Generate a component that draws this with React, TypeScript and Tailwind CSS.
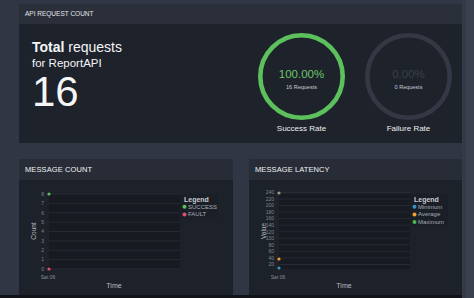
const font = { fontFamily: '"Liberation Sans", Arial, sans-serif' };
const ff = '"Liberation Sans", Arial, sans-serif';

function Gauge({ pct, sub, label, color, textColor }: { pct: string; sub: string; label: string; color: string; textColor: string }) {
  return (
    <div className="flex flex-col items-center w-[87px]">
      <div className="relative w-[87px] h-[87px]">
        <svg width="87" height="87" viewBox="0 0 87 87">
          <circle cx="43.5" cy="43.5" r="41.2" fill="none" stroke={color} strokeWidth="4.6" />
        </svg>
        <div className="absolute inset-0 flex flex-col items-center justify-center pt-[6px]">
          <span className="text-[11.5px] leading-none" style={{ color: textColor }}>{pct}</span>
          <span className="text-[5.5px] leading-none text-[#c8ccd2] mt-[4px]">{sub}</span>
        </div>
      </div>
      <span className="mt-[5px] text-[8px] leading-none text-[#eceef1]">{label}</span>
    </div>
  );
}

type Item = { name: string; color: string };

function Chart({ yTicks, yPos, axis, legend, points, legendH }: {
  yTicks: number[];
  yPos: (v: number) => number;
  axis: string;
  legend: Item[];
  points: { x: number; y: number; c: string }[];
  legendH: number;
}) {
  return (
    <svg width="214" height="115" viewBox="0 0 214 115" fontFamily={ff}>
      <rect x="30" y="14" width="131" height="75" fill="#171a21" />
      {yTicks.map((v) => (
        <g key={v}>
          <line x1="30" x2="161" y1={yPos(v)} y2={yPos(v)} stroke="#2a2f3a" strokeWidth="0.8" />
          <text x="25" y={yPos(v) + 1.8} fontSize="5" fill="#7f8590" textAnchor="end" fontFamily={ff}>{v}</text>
        </g>
      ))}
      <text x="0" y="0" fontSize="6.5" fill="#b4b8bf" textAnchor="middle" fontFamily={ff} transform="translate(17 51) rotate(-90)">{axis}</text>
      <text x="29" y="99" fontSize="5" fill="#8a909a" textAnchor="middle" fontFamily={ff}>Sat 06</text>
      <text x="95" y="107.5" fontSize="7" fill="#b8bcc3" textAnchor="middle" fontFamily={ff}>Time</text>
      <rect x="161" y="14" width="38" height={legendH} fill="#1a1e26" />
      <text x="165" y="21.5" fontSize="7" fontWeight="bold" fill="#c9ccd2" fontFamily={ff}>Legend</text>
      {legend.map((l, i) => (
        <g key={l.name}>
          <circle cx="165.5" cy={26.8 + i * 7.6} r="2" fill={l.color} />
          <text x="169" y={28.8 + i * 7.6} fontSize="6" fill="#a8adb5" fontFamily={ff}>{l.name}</text>
        </g>
      ))}
      {points.map((p, i) => (
        <circle key={i} cx={p.x} cy={p.y} r="1.6" fill={p.c} />
      ))}
    </svg>
  );
}

function Panel({ title, children, className }: { title: string; children: React.ReactNode; className: string }) {
  return (
    <div className={`flex flex-col ${className}`}>
      <div className="h-[21px] flex items-center pl-[6px] bg-[#272c36] text-[7.5px] text-[#f2f3f5] tracking-[0.1px]">{title}</div>
      <div className="flex-1 bg-[#1d2129]">{children}</div>
    </div>
  );
}

export default function App() {
  const countY = (v: number) => 89 - v * 9.375;
  const latY = (v: number) => 91 - v * 0.327;
  return (
    <div className="w-[474px] h-[298px] flex bg-[#303643] overflow-hidden" style={font}>
      <div className="flex-1 flex flex-col pl-[19px] pt-[4px]">
        <div className="w-[443px] h-[139px] flex flex-col">
          <div className="h-[20px] flex items-center pl-[6px] bg-[#2a2f3a] text-[6.5px] text-[#e4e6ea]">API REQUEST COUNT</div>
          <div className="flex-1 bg-[#1e222b] flex justify-between">
            <div className="pl-[13px] pt-[16px] text-[#f4f5f7]">
              <div className="text-[14px] leading-none"><span className="font-bold">Total</span> requests</div>
              <div className="text-[11.5px] leading-none mt-[4px]">for ReportAPI</div>
              <div className="text-[42px] leading-[40px] mt-[2px]">16</div>
            </div>
            <div className="flex gap-[20px] pr-[10px] pt-[9px]">
              <Gauge pct="100.00%" sub="16 Requests" label="Success Rate" color="#5cc05c" textColor="#6cc86a" />
              <Gauge pct="0.00%" sub="0 Requests" label="Failure Rate" color="#333844" textColor="#3a404b" />
            </div>
          </div>
        </div>
        <div className="flex gap-[16px] mt-[16px] h-[136px]">
          <Panel title="MESSAGE COUNT" className="w-[214px]">
            <Chart
              yTicks={[0, 1, 2, 3, 4, 5, 6, 7, 8]}
              yPos={countY}
              axis="Count"
              legendH={25}
              legend={[{ name: 'SUCCESS', color: '#5cc05c' }, { name: 'FAULT', color: '#e0506a' }]}
              points={[{ x: 30, y: 14, c: '#5cc05c' }, { x: 30, y: 89, c: '#e0506a' }]}
            />
          </Panel>
          <Panel title="MESSAGE LATENCY" className="w-[213px]">
            <Chart
              yTicks={[20, 40, 60, 80, 100, 120, 140, 160, 180, 200, 220, 240]}
              yPos={latY}
              axis="Value"
              legendH={33}
              legend={[{ name: 'Minimum', color: '#3f8fc4' }, { name: 'Average', color: '#f0a030' }, { name: 'Maximum', color: '#4cb84c' }]}
              points={[{ x: 30, y: 13, c: '#8aa08a' }, { x: 30, y: 79, c: '#f0a030' }, { x: 30, y: 88, c: '#3f8fc4' }]}
            />
          </Panel>
        </div>
        <div className="flex-1 bg-[#111318] -ml-[19px]" />
      </div>
      <div className="w-[12px] flex">
        <div className="w-[4px] bg-[#343a47]" />
        <div className="flex-1 bg-[#3a404d]" />
      </div>
    </div>
  );
}
